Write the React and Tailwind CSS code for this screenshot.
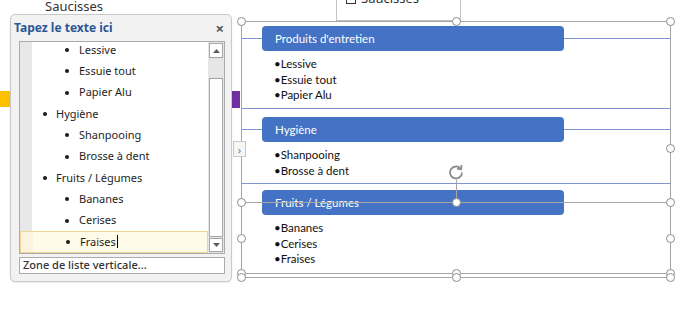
import React from "react";

const panelRows = [
  { level: 2, text: "Lessive" },
  { level: 2, text: "Essuie tout" },
  { level: 2, text: "Papier Alu" },
  { level: 1, text: "Hygiène" },
  { level: 2, text: "Shanpooing" },
  { level: 2, text: "Brosse à dent" },
  { level: 1, text: "Fruits / Légumes" },
  { level: 2, text: "Bananes" },
  { level: 2, text: "Cerises" },
  { level: 2, text: "Fraises", selected: true },
];

const groups = [
  { title: "Produits d'entretien", items: ["Lessive", "Essuie tout", "Papier Alu"], box: "h-[71px]" },
  { title: "Hygiène", items: ["Shanpooing", "Brosse à dent"], box: "h-[55px] mt-[20px]" },
  { title: "Fruits / Légumes", items: ["Bananes", "Cerises", "Fraises"], box: "h-[72px] mt-[18px]" },
];

const handles = [
  [241, 21], [456, 21], [670, 21], [670, 148],
  [241, 273], [456, 273], [670, 273],
  [241, 202], [456, 202], [670, 202],
  [241, 238], [670, 238],
  [241, 277], [456, 277], [670, 277],
];

function PanelRow({ row }) {
  return (
    <div
      className={
        "flex h-[21.33px] shrink-0 items-center " +
        (row.selected ? "border border-[#f1d595] bg-[#fffbea]" : "")
      }
    >
      <div className={"w-[12px] self-stretch " + (row.selected ? "bg-[#fbf3de]" : "bg-[#e8e8e8]")} />
      <span
        className={
          "h-[4px] w-[4px] rounded-full bg-[#1a1a1a] " + (row.level === 1 ? "ml-[11px]" : "ml-[33px]")
        }
      />
      <span className={"text-[11px] text-[#1e1e1e] " + (row.level === 1 ? "ml-[9px]" : "ml-[10px]")}>
        {row.text}
        {row.selected && <span className="ml-[1px] inline-block h-[13px] w-px translate-y-[2px] bg-black" />}
      </span>
    </div>
  );
}

function TextPanel() {
  return (
    <div className="absolute left-[10px] top-[14px] flex h-[268px] w-[222px] flex-col rounded-[5px] border border-[#c9c9c9] bg-[#f2f2f2] pl-[8px] pr-[6px] shadow-[0_1px_2px_rgba(0,0,0,0.08)]">
      <div className="-ml-[5px] flex h-[26px] items-center justify-between pr-[1px]">
        <span className="text-[12px] font-bold text-[#2b5797]">Tapez le texte ici</span>
        <span className="text-[15px] font-bold leading-none text-[#555]">×</span>
      </div>
      <div className="flex h-[213px] overflow-hidden border border-[#ababab] bg-white">
        <div className="flex flex-1 flex-col">
          <div className="-mt-[2.67px] flex flex-col">
            {panelRows.map((r) => (
              <PanelRow key={r.text} row={r} />
            ))}
          </div>
        </div>
        <div className="flex w-[16px] flex-col bg-[#e6e6e6] px-[1px] pt-[1px]">
          <div className="flex h-[15px] items-center justify-center border border-[#a6a6a6] bg-white">
            <svg width="7" height="4" viewBox="0 0 7 4">
              <path d="M0 4 L3.5 0 L7 4 Z" fill="#606060" />
            </svg>
          </div>
          <div className="h-[20px]" />
          <div className="h-[159px] border border-[#a6a6a6] bg-white" />
          <div className="mt-[1px] flex h-[14px] items-center justify-center border border-[#a6a6a6] bg-white">
            <svg width="7" height="4" viewBox="0 0 7 4">
              <path d="M0 0 L3.5 4 L7 0 Z" fill="#606060" />
            </svg>
          </div>
        </div>
      </div>
      <div className="mt-[3px] flex h-[17px] items-center border border-[#ababab] bg-white pl-[3px] text-[11px] font-medium text-[#333]">
        Zone de liste verticale...
      </div>
    </div>
  );
}

function Diagram() {
  return (
    <div className="absolute left-[241px] top-[38px] flex w-[430px] flex-col font-['Lato',sans-serif]">
      {groups.map((g) => (
        <div key={g.title} className={"border border-[#7d95d5] " + g.box}>
          <div className="-mt-[13px] ml-[20px] flex h-[25px] w-[302px] items-center rounded-[4px] bg-[#4472c4] pl-[13px] text-[11.5px] text-white">
            {g.title}
          </div>
          <div className="mt-[5px] pl-[32px] text-[11.5px] leading-[15.5px] text-[#111]">
            {g.items.map((it) => (
              <div key={it}>•{it}</div>
            ))}
          </div>
        </div>
      ))}
    </div>
  );
}

export default function App() {
  return (
    <div className="relative h-[316px] w-[698px] overflow-hidden bg-white font-['Noto_Sans',sans-serif]">
      <div className="absolute left-[45px] top-[-3px] text-[13px] text-[#333]">Saucisses</div>

      <div className="absolute left-[336px] top-[-12px] h-[33px] w-[125px] border border-[#c2c2c2] bg-white pl-[9px] text-[13px] text-[#333]">
        <span className="mr-[5px] inline-block h-[10px] w-[10px] translate-y-[1px] border-[1.5px] border-[#333]" />
        Saucisses
      </div>

      <div className="absolute left-0 top-[91px] h-[16px] w-[10px] bg-[#ffc000]" />
      <div className="absolute left-[232px] top-[91px] h-[17px] w-[8px] bg-[#7030a0]" />

      <Diagram />

      {/* selection frames */}
      <div className="absolute left-[241px] top-[21px] h-[253px] w-[430px] border border-[#a6a6a6]" />
      <div className="absolute left-[241px] top-[202px] h-[76px] w-[430px] border border-[#a6a6a6]" />
      <div className="absolute left-[456px] top-[180px] h-[20px] w-px bg-[#a6a6a6]" />

      <svg className="absolute left-[447px] top-[163px]" width="18" height="18" viewBox="0 0 18 18">
        <path d="M13.5 5.5 A6 6 0 1 0 15 9.5" fill="none" stroke="#8c8c8c" strokeWidth="1.8" />
        <path d="M14.5 2 L14.2 6.3 L10 5.6" fill="none" stroke="#8c8c8c" strokeWidth="1.8" />
      </svg>

      {handles.map(([x, y], i) => (
        <div
          key={i}
          className="absolute h-[9px] w-[9px] rounded-full border-[1.5px] border-[#8c8c8c] bg-white"
          style={{ left: x - 4.5, top: y - 4.5 }}
        />
      ))}

      <TextPanel />

      <div className="absolute left-[233px] top-[141px] flex h-[16px] w-[13px] items-center justify-center border border-[#c8c8c8] bg-[#f7f7f7] text-[11px] leading-none text-[#777]">
        ›
      </div>
    </div>
  );
}
